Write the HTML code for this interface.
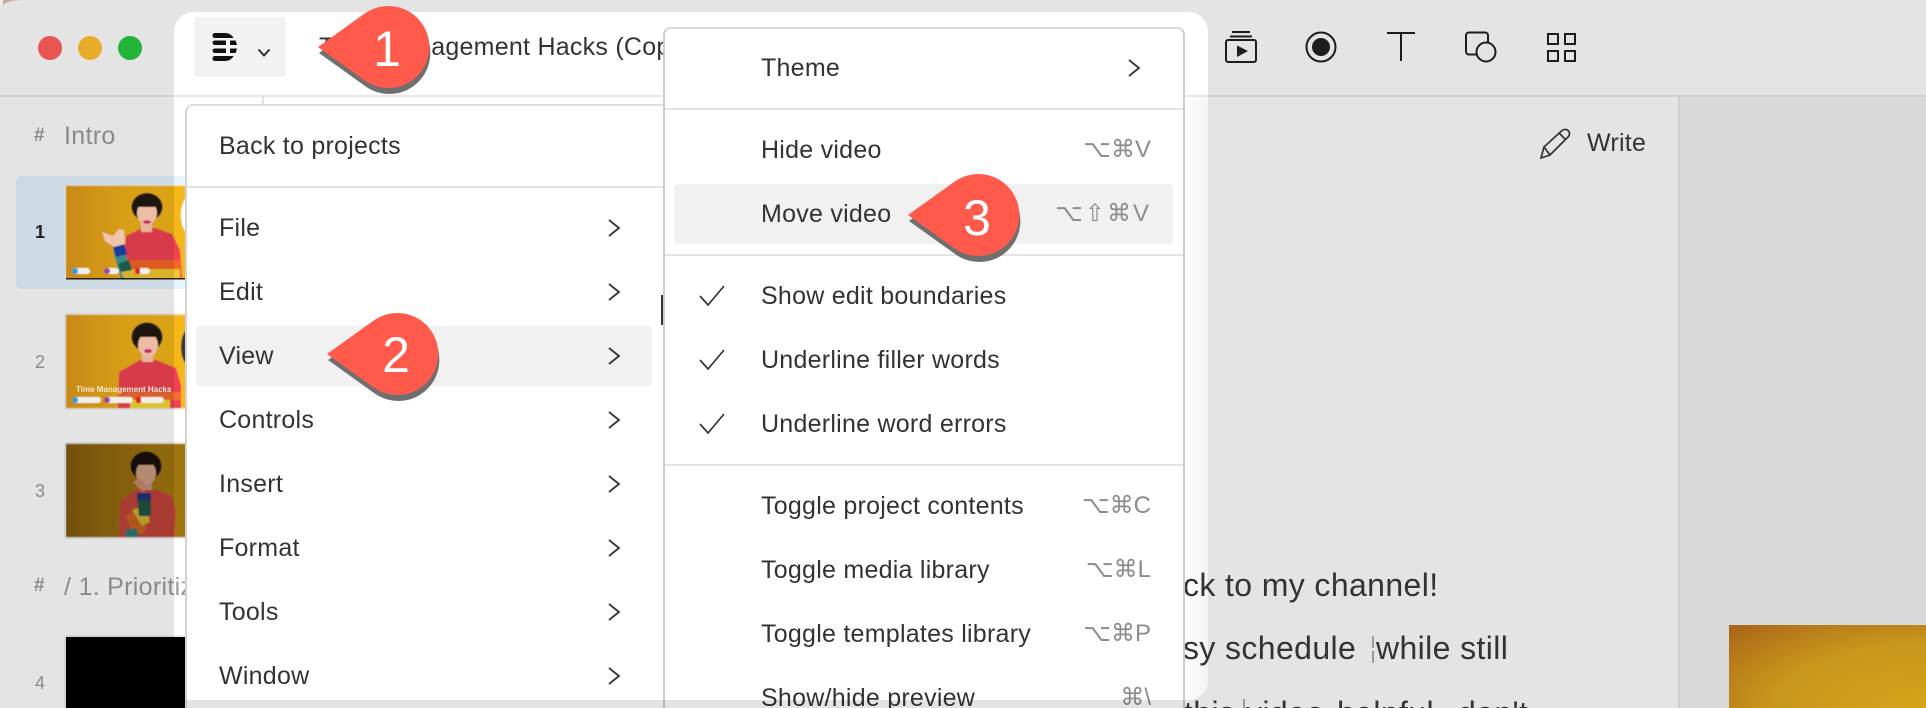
<!DOCTYPE html>
<html><head><meta charset="utf-8"><style>
html,body{margin:0;padding:0;width:1926px;height:708px;overflow:hidden}
#r{width:1926px;height:708px;position:relative;overflow:hidden;background:#e4e4e4;font-family:"Liberation Sans","DejaVu Sans",sans-serif;color:#333}
.a{position:absolute}
.t{position:absolute;white-space:nowrap;line-height:32px;height:32px;font-size:25px;letter-spacing:.25px;color:#333}
.b{font-size:32px;line-height:34px;height:34px;letter-spacing:.38px}
.k{position:absolute;white-space:nowrap;line-height:32px;height:32px;font-size:24px;color:#8c8c8c;right:775px;letter-spacing:0}
.g{color:#8a8a8a}
svg{position:absolute;left:0;top:0;overflow:visible}
</style></head><body><div id="r">
<!-- window corner -->
<svg width="40" height="30"><path d="M3 5C6 2 12 0 24 0H3Z" fill="#c9a593"/><path d="M0 16C0 8 1 3 4 1L0 0Z" fill="#f0ece8"/></svg>
<!-- right pane -->
<div class="a" style="left:1678px;top:96px;width:248px;height:612px;background:#d9d9d9;border-left:2px solid #cfcfcf;box-sizing:border-box"></div>
<div class="a" style="left:1729px;top:625px;width:197px;height:83px;background:radial-gradient(ellipse at 100% 100%,#d6a31a 0,#c9971b 55%,#a8641a 100%)"></div>
<div class="a" style="left:0;top:95px;width:1926px;height:2px;background:#d2d2d2"></div>
<!-- sidebar -->
<div class="a" style="left:16px;top:176px;width:190px;height:113px;background:#cbdae5;border-radius:6px"></div>
<div class="t g" style="left:34px;top:120px;font-weight:bold;font-size:19px;letter-spacing:0">#</div>
<div class="t g" style="left:64px;top:120px;letter-spacing:.3px">Intro</div>
<div class="t" style="left:35px;top:216px;font-weight:bold;font-size:18px;letter-spacing:0;color:#222">1</div>
<div class="t g" style="left:35px;top:346px;font-size:18px;letter-spacing:0">2</div>
<div class="t g" style="left:35px;top:475px;font-size:18px;letter-spacing:0">3</div>
<div class="t g" style="left:34px;top:570px;font-weight:bold;font-size:19px;letter-spacing:0">#</div>
<div class="t g" style="left:64px;top:571px;letter-spacing:.3px">/ 1. Prioritize</div>
<div class="t g" style="left:35px;top:667px;font-size:18px;letter-spacing:0">4</div>
<svg width="200" height="708">
<defs>
<linearGradient id="o" x1="0" y1="0" x2="1" y2="0"><stop offset="0" stop-color="#c98a12"/><stop offset=".5" stop-color="#d9a015"/><stop offset="1" stop-color="#dba51b"/></linearGradient>
<linearGradient id="d" x1="0" y1="0" x2="1" y2="0"><stop offset="0" stop-color="#74500f"/><stop offset=".6" stop-color="#8c6510"/><stop offset="1" stop-color="#8f6a12"/></linearGradient>
<clipPath id="c"><rect x="66" y="180" width="120" height="528"/></clipPath>
<filter id="bl"><feGaussianBlur stdDeviation=".55"/></filter>
</defs>
<rect x="64" y="184" width="130" height="97" fill="#d8d8d8" rx="3"/>
<rect x="64" y="313" width="130" height="97" fill="#d6d6d6" rx="3"/>
<rect x="64" y="442" width="130" height="97" fill="#d0d0d0" rx="3"/>
<rect x="64" y="635" width="130" height="73" fill="#d4d4d4" rx="3"/>
<g clip-path="url(#c)">
<g filter="url(#bl)">
<!-- thumb 1 -->
<rect x="66" y="186" width="130" height="93" fill="url(#o)"/>
<path d="M123 279 126 236 142 228 155 228 172 234 180 250 182 279Z" fill="#d73a4a"/>
<rect x="128" y="260" width="52" height="9" fill="#dd5a22"/>
<rect x="128" y="269" width="52" height="10" fill="#d8b22a"/>
<path d="M134 279 124 250 113 250 121 279Z" fill="#3a8a8a"/>
<path d="M113 247 124 243 127 254 116 257Z" fill="#1f3a9a"/>
<path d="M118 264 129 260 132 270 121 272Z" fill="#1f5a4a"/>
<path d="M121 272 133 270 135 279 124 279Z" fill="#d8b22a"/>
<path d="M102 232 113 236 119 229 124 230 125 244 114 247 105 241Z" fill="#f0c6ac"/>
<rect x="141" y="222" width="11" height="10" fill="#e8b59c"/>
<ellipse cx="147" cy="207" rx="15.500" ry="14" fill="#1c1411"/>
<ellipse cx="147" cy="213" rx="10" ry="12" fill="#ecbca4"/>
<rect x="137" y="201" width="20" height="6" fill="#1c1411"/>
<ellipse cx="147" cy="222" rx="4" ry="1.800" fill="#c2286a"/>
<rect x="73" y="268" width="17" height="6" rx="3" fill="#f2efe6"/><circle cx="75" cy="271" r="3" fill="#2a9ae0"/>
<rect x="104" y="268" width="15" height="6" rx="3" fill="#f2efe6"/><circle cx="107" cy="271" r="3" fill="#a040a0"/>
<rect x="135" y="268" width="15" height="6" rx="3" fill="#f2efe6"/><rect x="135" y="268" width="5" height="6" fill="#e02020"/>
<ellipse cx="190" cy="215" rx="9" ry="19" fill="#f5efe8"/><ellipse cx="192" cy="215" rx="5" ry="14" fill="#d66"/>
<!-- thumb 2 -->
<rect x="66" y="315" width="130" height="93" fill="url(#o)"/>
<path d="M118 408 119 372 140 360 156 360 176 368 181 385 181 408Z" fill="#d73a4a"/>
<rect x="118" y="392" width="63" height="8" fill="#d9622a"/>
<rect x="130" y="400" width="40" height="8" fill="#dcc22a"/>
<rect x="142" y="352" width="11" height="10" fill="#e8b59c"/>
<ellipse cx="147" cy="337" rx="15.500" ry="14.500" fill="#1c1411"/>
<ellipse cx="148" cy="345" rx="10" ry="12" fill="#ecbca4"/>
<rect x="138" y="332" width="20" height="5" fill="#1c1411"/>
<ellipse cx="148" cy="351" rx="4" ry="2" fill="#c2286a"/>
<rect x="73" y="397" width="28" height="6" rx="3" fill="#f2efe6"/><circle cx="75" cy="400" r="3" fill="#2a9ae0"/>
<rect x="105" y="397" width="28" height="6" rx="3" fill="#f2efe6"/><circle cx="107" cy="400" r="3" fill="#a040a0"/>
<rect x="136" y="397" width="28" height="6" rx="3" fill="#f2efe6"/><rect x="136" y="397" width="5" height="6" fill="#e02020"/>
<ellipse cx="190" cy="347" rx="9" ry="19" fill="#333"/><ellipse cx="192" cy="347" rx="6" ry="15" fill="#e9d0c8"/>
<!-- thumb 3 -->
<rect x="66" y="444" width="130" height="93" fill="url(#d)"/>
<path d="M119 537 120 502 136 490 158 490 172 496 176 512 174 537Z" fill="#a93a33"/>
<rect x="142" y="480" width="10" height="10" fill="#a97f6a"/>
<ellipse cx="146" cy="466" rx="15.500" ry="14.500" fill="#141010"/>
<ellipse cx="146" cy="473" rx="10" ry="12" fill="#b58a72"/>
<rect x="136" y="461" width="20" height="4" fill="#141010"/>
<path d="M125 516 137 510 147 526 143 534 132 532Z" fill="#b0551f"/>
<path d="M132 510 146 505 150 522 142 526Z" fill="#b39a2a"/>
<path d="M137 493 151 493 151 516 139 516Z" fill="#1f4a3a"/>
<path d="M137 493 151 493 151 500 137 500Z" fill="#1f2f6a"/>
<path d="M125 530 137 528 138 537 126 537Z" fill="#2a6a66"/>
<path d="M133 482 140 478 149 488 143 492Z" fill="#b07a62"/>
</g>
<rect x="66" y="278" width="130" height="1.500" fill="#222"/>
<text x="76" y="392" font-size="8px" font-weight="bold" fill="#f3ead2" font-family="Liberation Sans,sans-serif">Time Management Hacks</text>
<!-- thumb 4 -->
<rect x="66" y="637" width="130" height="71" fill="#000"/>
</g>
</svg>
<!-- toolbar traffic lights -->
<div class="a" style="left:38px;top:36px;width:24px;height:24px;border-radius:50%;background:#e75650"></div>
<div class="a" style="left:78px;top:36px;width:24px;height:24px;border-radius:50%;background:#e9ac2a"></div>
<div class="a" style="left:118px;top:36px;width:24px;height:24px;border-radius:50%;background:#23b43a"></div>
<!-- toolbar icons -->
<svg width="1926" height="708" fill="none" stroke="#1d1d1d" stroke-width="2">
<path d="M1232 32h18M1230 36.500h22" stroke-width="2"/>
<rect x="1226" y="40" width="30" height="22" rx="2"/>
<path d="M1237 45.500 1248 51 1237 57Z" fill="#1d1d1d" stroke="none"/>
<circle cx="1321" cy="47" r="14.500"/><circle cx="1321" cy="47" r="9" fill="#1d1d1d" stroke="none"/>
<path d="M1387 33h28M1401 33v28"/>
<rect x="1466" y="32.500" width="22" height="22" rx="3"/>
<circle cx="1486" cy="52" r="9.500" fill="#e4e4e4"/>
<rect x="1548" y="34" width="10" height="10"/><rect x="1565" y="34" width="10" height="10"/><rect x="1548" y="51" width="10" height="10"/><rect x="1565" y="51" width="10" height="10"/>
<path d="M1541 158 1544 147 1562 130.500C1564 129 1567 129 1568.500 131 1570 133 1570 135 1568 137L1550 155ZM1559 133 1566 140M1544 147 1550 155" stroke="#333" stroke-width="1.700"/>
</svg>
<div class="t" style="left:1587px;top:127px">Write</div>
<!-- highlight panel -->
<div class="a" style="left:174px;top:12px;width:1034px;height:85px;background:#fff;border-radius:20px 20px 0 0"></div>
<div class="a" style="left:174px;top:95px;width:1034px;height:2px;background:#e8e8e8"></div>
<div class="a" style="left:174px;top:97px;width:12px;height:603px;background:#1c1c1c;mix-blend-mode:color-dodge"></div>
<div class="a" style="left:1185px;top:97px;width:23px;height:603px;background:linear-gradient(90deg,#fff,#f3f3f3);border-radius:0 0 20px 0"></div>
<div class="a" style="left:186px;top:97px;width:1000px;height:603px;background:#fff"></div>
<div class="a" style="left:262px;top:95px;width:2px;height:12px;background:#e2e2e2"></div>
<!-- main text -->
<div class="t b" style="left:1183px;top:568px">ck to my channel!</div>
<div class="t b" style="left:1183px;top:631px">sy schedule</div>
<div class="a" style="left:1372px;top:636px;width:2px;height:28px;background:repeating-linear-gradient(#9a9a9a 0,#9a9a9a 12px,transparent 12px,transparent 15px)"></div>
<div class="t b" style="left:1376px;top:631px">while still</div>
<div class="t b" style="left:1184px;top:696px">this</div>
<div class="a" style="left:1243px;top:699px;width:2px;height:9px;background:#9a9a9a"></div>
<div class="t b" style="left:1246px;top:696px">video</div>
<div class="t b" style="left:1337px;top:696px">helpful,</div>
<div class="t b" style="left:1458px;top:696px">don't</div>
<!-- header contents -->
<div class="a" style="left:194px;top:17px;width:92px;height:60px;background:#f2f2f2;border-radius:4px"></div>
<svg width="300" height="100">
<g fill="#111">
<path d="M215 33h10c4 0 7 2 8.500 5H215c-1.400 0-2.500-1-2.500-2.500S213.600 33 215 33Z"/>
<path d="M215 40.500h11v4.500h-11c-1.300 0-2.500-1-2.500-2.250S213.700 40.500 215 40.500ZM230 40.500h5.500c.7 1.400 1.300 3 1.400 4.500H230Z"/>
<path d="M215 48.500h11v4.500h-11c-1.300 0-2.500-1-2.500-2.250S213.700 48.500 215 48.500ZM230 48.500h6.900c-.1 1.500-.7 3-1.400 4.500H230Z"/>
<path d="M215 56h18.500c-1.500 3-4.500 5-8.500 5h-10c-1.400 0-2.500-1-2.500-2.500S213.600 56 215 56Z"/>
</g>
<path d="M258.500 49.500 264 55.500 269.500 49.500" fill="none" stroke="#222" stroke-width="1.800"/>
</svg>
<div class="t" style="left:319px;top:31px">Time Management Hacks (Copy)</div>
<!-- menu 1 -->
<div class="a" style="left:185px;top:104px;width:490px;height:620px;background:#fff;border:2px solid #dedede;border-left-color:#d2d2d2;border-radius:8px;box-sizing:border-box"></div>
<div class="a" style="left:187px;top:186px;width:480px;height:2px;background:#e4e4e4"></div>
<div class="a" style="left:196px;top:326px;width:456px;height:60px;background:#f1f1f1;border-radius:4px"></div>
<div class="t" style="left:219px;top:130px">Back to projects</div>
<div class="t" style="left:219px;top:212px">File</div>
<div class="t" style="left:219px;top:276px">Edit</div>
<div class="t" style="left:219px;top:340px">View</div>
<div class="t" style="left:219px;top:404px">Controls</div>
<div class="t" style="left:219px;top:468px">Insert</div>
<div class="t" style="left:219px;top:532px">Format</div>
<div class="t" style="left:219px;top:596px">Tools</div>
<div class="t" style="left:219px;top:660px">Window</div>
<svg width="660" height="708" fill="none" stroke="#333" stroke-width="1.800">
<path d="M609 220 619 228 609 236M609 284 619 292 609 300M609 348 619 356 609 364M609 412 619 420 609 428M609 476 619 484 609 492M609 540 619 548 609 556M609 604 619 612 609 620M609 668 619 676 609 684"/>
</svg>
<div class="a" style="left:661px;top:295px;width:2px;height:30px;background:#333"></div>
<!-- menu 2 -->
<div class="a" style="left:663px;top:27px;width:522px;height:700px;background:#fff;border:2px solid #dcdcdc;border-left-color:#cdcdcd;border-right-color:#cdcdcd;border-radius:8px;box-sizing:border-box"></div>
<div class="a" style="left:665px;top:108px;width:518px;height:2px;background:#e4e4e4"></div>
<div class="a" style="left:665px;top:254px;width:518px;height:2px;background:#e4e4e4"></div>
<div class="a" style="left:665px;top:464px;width:518px;height:2px;background:#e4e4e4"></div>
<div class="a" style="left:674px;top:184px;width:499px;height:60px;background:#f1f1f1;border-radius:4px"></div>
<div class="t" style="left:761px;top:52px">Theme</div>
<div class="t" style="left:761px;top:134px">Hide video</div>
<div class="t" style="left:761px;top:198px">Move video</div>
<div class="t" style="left:761px;top:280px">Show edit boundaries</div>
<div class="t" style="left:761px;top:344px">Underline filler words</div>
<div class="t" style="left:761px;top:408px">Underline word errors</div>
<div class="t" style="left:761px;top:490px">Toggle project contents</div>
<div class="t" style="left:761px;top:554px">Toggle media library</div>
<div class="t" style="left:761px;top:618px">Toggle templates library</div>
<div class="t" style="left:761px;top:682px">Show/hide preview</div>
<div class="k" style="top:134px">⌥⌘V</div>
<div class="k" style="top:198px;letter-spacing:2px">⌥⇧⌘V</div>
<div class="k" style="top:490px">⌥⌘C</div>
<div class="k" style="top:554px">⌥⌘L</div>
<div class="k" style="top:618px">⌥⌘P</div>
<div class="k" style="top:682px">⌘\</div>
<svg width="1200" height="708" fill="none" stroke="#333" stroke-width="1.800">
<path d="M1129 60 1139 68 1129 76"/>
<path d="M700 296 708 305 724 286M700 360 708 369 724 350M700 424 708 433 724 414" stroke-width="1.700"/>
</svg>
<!-- bottom dim -->
<div class="a" style="left:186px;top:700px;width:999px;height:8px;background:#e3e3e3;mix-blend-mode:multiply"></div>
<!-- markers -->
<svg width="1926" height="708">
<defs><path id="m" d="M-70 0-24-33A41 41 0 1 1-24 33Z"/></defs>
<use href="#m" transform="translate(389,53)" fill="#6f6f6f"/>
<use href="#m" transform="translate(388,47)" fill="#ff5a4b"/>
<use href="#m" transform="translate(398,360)" fill="#6f6f6f"/>
<use href="#m" transform="translate(397,354)" fill="#ff5a4b"/>
<use href="#m" transform="translate(979,221)" fill="#6f6f6f"/>
<use href="#m" transform="translate(978,215)" fill="#ff5a4b"/>
<g fill="#fff" font-family="Liberation Sans,sans-serif" font-size="50px" text-anchor="middle">
<text x="387" y="66">1</text>
<text x="396" y="372">2</text>
<text x="977" y="235">3</text>
</g>
</svg>
</div></body></html>
